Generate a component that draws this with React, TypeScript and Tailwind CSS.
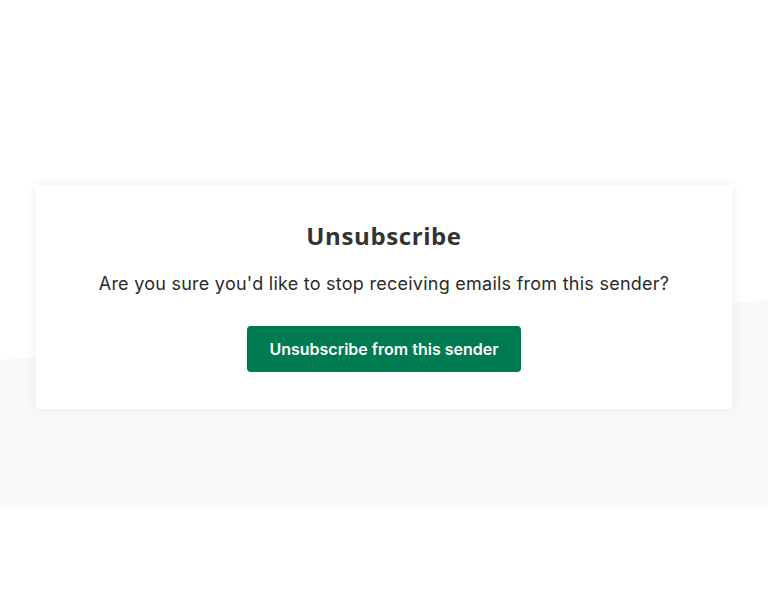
export default function App() {
  return (
    <div className="min-h-[614px] bg-white font-['Inter','Liberation_Sans',sans-serif]">
      <div className="h-[186px]" />

      <section className="relative px-9 pb-[98px]">
        {/* slanted grey band behind the card */}
        <div className="absolute inset-x-0 top-[114px] bottom-0 bg-[#f9f9f9] [clip-path:polygon(0_60px,100%_0,100%_100%,0_100%)]" />

        <div className="relative flex flex-col items-center bg-white px-6 pt-[36px] pb-[37px] shadow-[0_0_12px_rgba(0,0,0,0.07)]">
          <h1 className="font-['Open_Sans',sans-serif] text-[24px] leading-[28px] font-bold tracking-[0.6px] text-[#333333]">
            Unsubscribe
          </h1>
          <p className="mt-[21px] text-[18px] leading-[26px] tracking-[0.25px] text-[#2b2b2b]">
            Are you sure you'd like to stop receiving emails from this sender?
          </p>
          <button
            type="button"
            className="mt-[29px] h-[46px] w-[274px] rounded-[4px] bg-[#007a50] text-[16px] font-semibold text-white"
          >
            Unsubscribe from this sender
          </button>
        </div>
      </section>
    </div>
  );
}
